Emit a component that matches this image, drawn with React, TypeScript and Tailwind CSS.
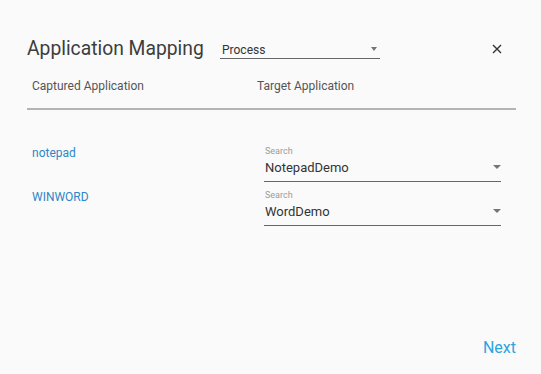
import React from 'react';

const mappings = [
  { id: 'notepad', captured: 'notepad', target: 'NotepadDemo' },
  { id: 'winword', captured: 'WINWORD', target: 'WordDemo' },
];

function Caret({ w, h }: { w: number; h: number }) {
  return (
    <svg width={w} height={h} viewBox="0 0 10 5" className="shrink-0" preserveAspectRatio="none">
      <path d="M0 0 L5 5 L10 0 Z" fill="#757575" />
    </svg>
  );
}

export default function App() {
  return (
    <div className="w-[541px] h-[374px] bg-[#fafafa] font-['Roboto',sans-serif] flex flex-col pl-[27px] pr-[25px]">
      {/* header */}
      <div className="flex items-start mt-[36px] h-[24px]">
        <h1 className="w-[193px] shrink-0 text-[19.3px] leading-[24px] pt-[1px] text-[#3d3d3d] whitespace-nowrap">
          Application Mapping
        </h1>
        <div className="mt-[6px] w-[160px] flex items-center justify-between border-b border-[#666] pl-[2px] pr-[3px]">
          <span className="text-[12px] leading-[16px] text-[#333]">Process</span>
          <span className="mb-[3px]">
            <Caret w={6} h={4} />
          </span>
        </div>
        <button className="ml-auto mr-[14px] mt-[8px] w-[10px] h-[10px] flex">
          <svg width="10" height="10" viewBox="0 0 10 10">
            <path d="M1 1 L9 9 M9 1 L1 9" stroke="#333" strokeWidth="1.4" />
          </svg>
        </button>
      </div>

      {/* column titles */}
      <div className="flex mt-[18px] pl-[5px] text-[12px] leading-[16px] text-[#555]">
        <span className="w-[225px] shrink-0">Captured Application</span>
        <span>Target Application</span>
      </div>
      <div className="mt-[14px] h-[1.5px] bg-[#b4b4b4]" />

      {/* rows */}
      <div className="flex flex-col gap-[7px] mt-[35px]">
        {mappings.map((m) => (
          <div key={m.id} className="flex items-start">
            <span className="w-[237px] shrink-0 pl-[5px] text-[12px] leading-[16px] text-[#2f86c6]">
              {m.captured}
            </span>
            <div className="w-[237px] flex flex-col border-b border-[#666] pb-[5px]">
              <span className="pl-[1px] text-[9px] leading-[12px] text-[#9a9a9a]">Search</span>
              <div className="mt-[3px] flex items-center justify-between pl-[1px]">
                <span className="text-[13px] leading-[16px] text-[#333]">{m.target}</span>
                <span className="mb-[1px]">
                  <Caret w={8} h={4} />
                </span>
              </div>
            </div>
          </div>
        ))}
      </div>

      {/* footer */}
      <div className="mt-auto mb-[16px] flex justify-end">
        <button className="text-[16px] leading-[20px] text-[#2ba5de]">Next</button>
      </div>
    </div>
  );
}
